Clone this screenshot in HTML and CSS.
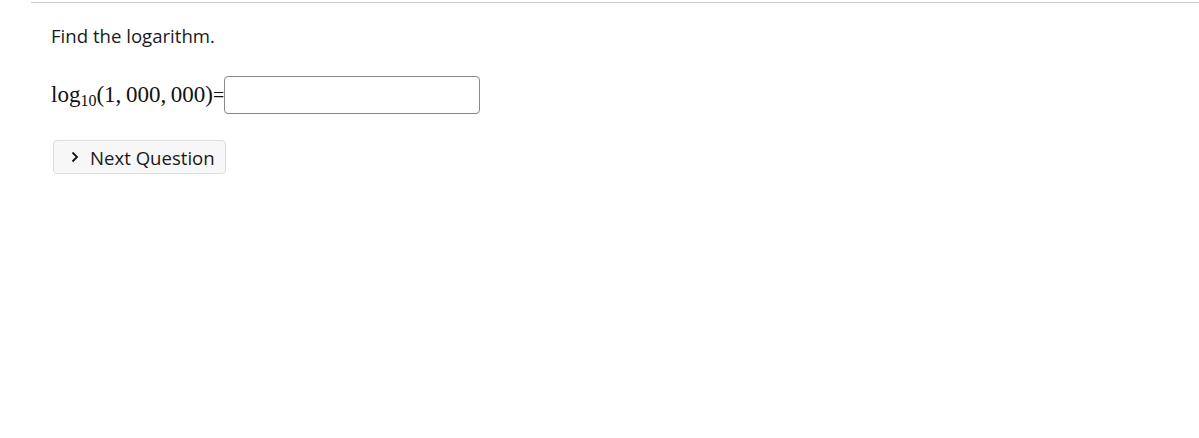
FILE: index.html
```html
<!DOCTYPE html>
<html>
<head>
<meta charset="utf-8">
<link rel="stylesheet" href="styles.css">
</head>
<body>
<div class="page">
  <div class="question">
    <p class="prompt">Find the logarithm.</p>
    <div class="answer-row">
      <span class="math">log<sub>10</sub>(1,&#8201;000,&#8201;000)</span><span class="eq">=</span><input class="answer" type="text" aria-label="answer">
    </div>
    <button class="next" type="button">
      <svg class="chev" width="10" height="12" viewBox="0 0 10 12"><path d="M2.5 1.5 L7 6 L2.5 10.5" fill="none" stroke="#111" stroke-width="1.8"/></svg>
      <span>Next Question</span>
    </button>
  </div>
</div>
</body>
</html>
```
FILE: styles.css
```css
html, body {
  margin: 0;
  padding: 0;
  background: #fff;
}
body {
  font-family: "Open Sans", sans-serif;
  color: #222;
}
.page {
  margin-left: 31px;
  padding-top: 2px;
}
.question {
  border-top: 1px solid #cfcfcf;
  padding: 19px 0 0 20px;
}
.prompt {
  margin: 0;
  font-size: 18.6px;
  line-height: 27px;
  color: #1a1a1a;
}
.answer-row {
  display: flex;
  align-items: center;
  margin-top: 27px;
  height: 38px;
}
.math {
  font-family: "Liberation Serif", "Times New Roman", serif;
  font-size: 23px;
  color: #111;
  white-space: nowrap;
}
.math sub {
  font-size: 16px;
  vertical-align: -4px;
  line-height: 0;
}
.eq {
  font-family: "Liberation Serif", serif;
  font-size: 20px;
  color: #111;
}
.answer {
  box-sizing: border-box;
  width: 256px;
  height: 38px;
  border: 1px solid #8a8a8a;
  border-radius: 4px;
  margin: 0;
  padding: 0 8px;
  font-size: 18px;
}
.next {
  display: flex;
  align-items: center;
  gap: 10px;
  box-sizing: border-box;
  margin-top: 26px;
  margin-left: 2px;
  height: 34px;
  width: 173px;
  padding: 0 0 0 16px;
  background: #f7f7f7;
  border: 1px solid #dcdcdc;
  border-radius: 4px;
  font-family: "Open Sans", sans-serif;
  font-size: 18.6px;
  color: #1a1a1a;
  cursor: pointer;
}
.chev {
  flex: none;
}
```
